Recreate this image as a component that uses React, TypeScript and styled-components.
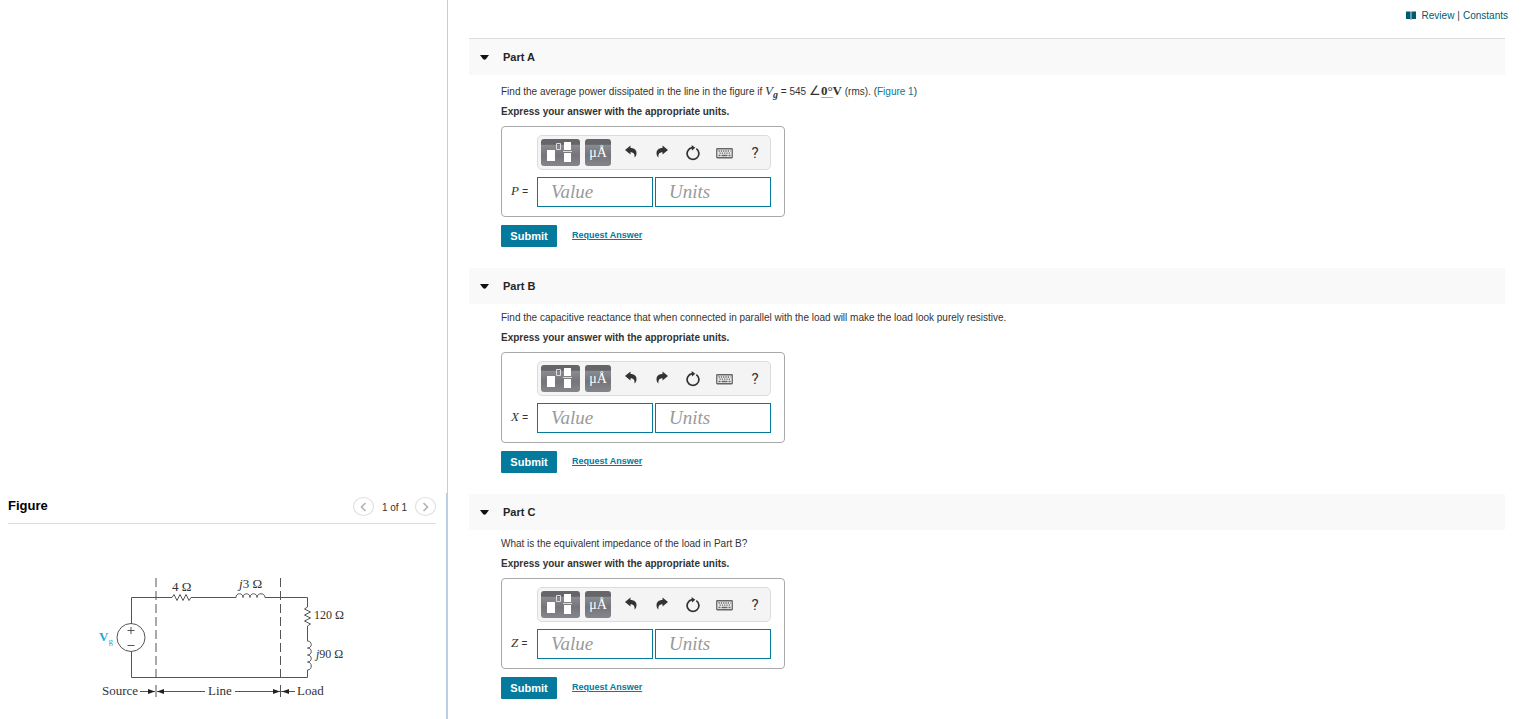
import React from "react";
import styled, { createGlobalStyle } from "styled-components";

const sans = `"Liberation Sans", Arial, sans-serif`;
const serif = `"Liberation Serif", "Times New Roman", serif`;
const teal = "#047a9c";

const GlobalStyle = createGlobalStyle`
  *, *::before, *::after { box-sizing: border-box; }
  body { margin: 0; background: #fff; color: #333; font-family: ${sans}; font-size: 10px; line-height: 14px; }
  button, input { font-family: inherit; margin: 0; }
  h2, p { margin: 0; }
`;

const Page = styled.div`
  display: grid;
  grid-template-columns: minmax(320px, 448fr) 1073fr;
  min-height: 100vh;
`;

const Sidebar = styled.aside`
  display: flex;
  flex-direction: column;
  justify-content: flex-end;
  border-right: 1px solid #c7cdd1;
`;

const FigurePanel = styled.section`
  padding: 3px 10px 15px 8px;
  border-right: 1px solid #b9cbe0;
`;

const FigureHeader = styled.div`
  display: flex;
  align-items: center;
  justify-content: space-between;
  height: 28px;
  border-bottom: 1px solid #dcdcdc;
  padding-bottom: 6px;
`;

const FigureTitle = styled.h2`
  font-size: 13px;
  line-height: 16px;
  font-weight: 600;
  color: #000;
  padding-bottom: 1px;
`;

const Pager = styled.div`
  display: flex;
  align-items: center;
  gap: 8px;
`;

const PagerButton = styled.button`
  display: grid;
  place-items: center;
  width: 21px;
  height: 19px;
  padding: 0;
  border: 1px solid #dedede;
  border-radius: 50%;
  background: #fff;
`;

const PagerText = styled.span`
  font-size: 10px;
  padding-top: 3px;
`;

const Circuit = styled.svg`
  display: block;
  margin: 46px auto 0;
  font-family: ${serif};
  font-size: 13px;
`;

const Main = styled.main`
  padding: 0 16px 0 21px;
`;

const TopLinks = styled.nav`
  display: flex;
  align-items: center;
  justify-content: flex-end;
  height: 38px;
  padding-bottom: 7px;
  margin-right: -3px;
  gap: 3px;
  font-size: 10px;
  color: #444;
`;

const TopLink = styled.a`
  display: inline-flex;
  align-items: center;
  gap: 6px;
  color: #005a70;
  text-decoration: none;
`;

const PartHeader = styled.h2<{ $ruled?: boolean }>`
  background: #f9f9f9;
  border-top: ${(p) => (p.$ruled ? "1px solid #dcdcdc" : "0")};
`;

const PartToggle = styled.button`
  display: flex;
  align-items: center;
  gap: 14px;
  width: 100%;
  height: 36px;
  padding: 0 11px;
  border: 0;
  background: none;
  color: #252525;
  font-size: 11px;
  font-weight: 600;
`;

const PartBody = styled.div`
  padding: 7px 0 21px 32px;
`;

const Question = styled.p`
  margin-bottom: 6px;
`;

const Instruction = styled.p`
  margin-bottom: 7px;
  font-weight: 700;
`;

const MathText = styled.span`
  font-family: ${serif};
  font-size: 13px;
  line-height: 17px;
`;

const MathSub = styled.sub`
  font-size: 10px;
  line-height: 0;
  font-style: italic;
  font-weight: 700;
  vertical-align: -3px;
`;

const Phase = styled.span`
  display: inline-block;
  line-height: 12px;
  border-bottom: 1px solid #aaa;
`;

const FigureLink = styled.a`
  color: ${teal};
  text-decoration: none;
`;

const AnswerBox = styled.div`
  display: grid;
  grid-template-columns: 26px 234px;
  row-gap: 7px;
  width: fit-content;
  padding: 8px 13px 9px 9px;
  border: 1px solid #a9a9a9;
  border-radius: 4px;
`;

const Toolbar = styled.div`
  grid-column: 2;
  display: flex;
  align-items: center;
  gap: 1px;
  height: 35px;
  padding-left: 3px;
  background: #f4f4f4;
  border: 1px solid #dcdcdc;
  border-radius: 5px;
`;

const DarkTool = styled.button<{ $width: number }>`
  display: grid;
  place-items: center;
  flex: none;
  width: ${(p) => p.$width}px;
  height: 27px;
  margin-right: 4px;
  padding: 0;
  border: 0;
  border-radius: 3px;
  background: linear-gradient(#66666a 0 20%, #8b8b93 22%, #74747a 60%, #85858c);
  color: #fff;
  font: 14px/25px ${serif};
`;

const Tool = styled.button`
  display: grid;
  place-items: center;
  flex: none;
  width: 30px;
  height: 30px;
  padding: 0;
  border: 0;
  background: none;
  color: #333;
  font-family: Roboto, ${sans};
  font-size: 15px;
`;

const VariableLabel = styled.label`
  align-self: center;
  padding-bottom: 1px;
  font-family: ${serif};
  font-size: 13px;
`;

const Equals = styled.span`
  font-family: ${sans};
  font-size: 10px;
`;

const Fields = styled.div`
  display: grid;
  grid-template-columns: 1fr 1fr;
  gap: 2px;
`;

const Field = styled.input`
  min-width: 0;
  width: 100%;
  height: 30px;
  padding: 0 13px;
  border: 1px solid ${teal};
  border-radius: 0;
  background: #fff;
  font: italic 19px/24px ${serif};
  &::placeholder { color: #999; opacity: 1; }
`;

const Actions = styled.div`
  display: flex;
  align-items: center;
  gap: 15px;
  margin-top: 8px;
`;

const SubmitButton = styled.button`
  width: 56px;
  height: 22px;
  padding: 0;
  border: 0;
  border-radius: 1px;
  background: ${teal};
  color: #fff;
  font-size: 11px;
  font-weight: 700;
`;

const RequestLink = styled.a`
  padding-bottom: 2px;
  color: ${teal};
  font-size: 9px;
  font-weight: 700;
`;

const Caret = () => (
  <svg width="9" height="5" viewBox="0 0 9 5" aria-hidden="true">
    <path d="M0 0h9L6 4Q4.500 5.500 3 4z" fill="#111" />
  </svg>
);

const Chevron = ({ right }: { right?: boolean }) => (
  <svg width="7" height="10" viewBox="0 0 7 10" fill="none" stroke="#b4b4b4" strokeWidth="1.600" aria-hidden="true">
    <path d={right ? "M1.500 1l4 4-4 4" : "M5.500 1l-4 4 4 4"} />
  </svg>
);

const BookIcon = () => (
  <svg width="10" height="9" viewBox="0 0 10 9" aria-hidden="true">
    <path d="M0 .5h4.600v7.500H0zM5.400 .5H10v7.500H5.400z" fill="#005a70" />
    <path d="M4.500 1h1v8h-1z" fill="#5f97a5" />
  </svg>
);

const TemplateIcon = () => (
  <svg width="27" height="23" viewBox="0 0 27 23" aria-hidden="true">
    <path d="M0 9h8v11H0zM17 1h7v8h-7zM17 12h7v9h-7z" fill="#fff" />
    <path d="M9.500 2.500h4v6h-4z" fill="none" stroke="#ddd" />
    <path d="M16 10.500h9" stroke="#ddd" />
  </svg>
);

const UndoIcon = ({ flip }: { flip?: boolean }) => (
  <svg width="12" height="15" viewBox="0 0 12 15" aria-hidden="true">
    <path
      d="M0 5L5.500 .5V3C9.500 3 11.500 5.200 11.500 8.200C11.500 10 10.800 11.400 9.500 12.600C10 9 8.800 7.300 5.500 7.200V9.500z"
      fill="#333"
      transform={flip ? "matrix(-1 0 0 1 12 0)" : undefined}
    />
  </svg>
);

const ResetIcon = () => (
  <svg width="14" height="16" viewBox="0 0 14 16" aria-hidden="true">
    <path d="M10.300 3.600A5.900 5.900 0 1 1 6 2.700" fill="none" stroke="#333" strokeWidth="1.700" />
    <path d="M5.600 0L9.300 2.700L6 5.600z" fill="#333" />
  </svg>
);

const KeyboardIcon = () => (
  <svg width="17" height="13" viewBox="0 -2 17 13" aria-hidden="true">
    <rect x=".75" y=".75" width="15.500" height="9" rx=".5" fill="#eee" stroke="#666" strokeWidth="1.300" />
    <g stroke="#666" strokeWidth="1.300">
      <path d="M2.500 3h12" strokeDasharray="1.300 1" />
      <path d="M3.500 5.200h11" strokeDasharray="1.300 1" />
      <path d="M2.500 7.500h2M5.500 7.500h6M12.500 7.500h2" />
    </g>
  </svg>
);

const CircuitDiagram = () => (
  <Circuit width="264" height="135" viewBox="90 570 264 135" role="img" aria-label="Circuit with source, line and load">
    <g fill="none" stroke="#555" strokeWidth="1">
      <path d="M131.500 624V597.500H172l2-3 3 6 3-6 3 6 3-6 3 6 2-3H236c0-5 7-5 7 0c0-5 7-5 7 0c0-5 7-5 7 0c0-5 8-5 8 0H307.500V607l-3 2 6 3-6 3 6 3-6 3 6 3-3 2V641c5 0 5 7 0 7c5 0 5 7 0 7c5 0 5 7 0 7c5 0 5 8 0 8V677.500H131.500V652" />
      <circle cx="131" cy="637.500" r="14" />
      <path d="M127.500 630.500h7M131 627v7M127.500 645.500h7" />
      <path d="M156 578V682M280.500 578V682" strokeDasharray="9 4" />
      <path d="M156 685v12M280.500 685v12M140 691.500h15M157 691.500h48M235 691.500h45M281 691.500h14" />
    </g>
    <path d="M148 689l7 2.500-7 2.500zM164 689l-7 2.500 7 2.500zM273 689l7 2.500-7 2.500zM289 689l-7 2.500 7 2.500z" fill="#222" />
    <g fill="#333">
      <text x="172" y="591">4 Ω</text>
      <text x="239" y="588"><tspan fontStyle="italic">j</tspan>3 Ω</text>
      <text x="314" y="619" fontSize="12">120 Ω</text>
      <text x="316" y="658" fontSize="12"><tspan fontStyle="italic">j</tspan>90 Ω</text>
      <text x="102" y="695">Source</text>
      <text x="208" y="695">Line</text>
      <text x="297" y="695">Load</text>
    </g>
    <text x="99" y="641" fill="#1ba9e1" fontWeight="700">V<tspan fontSize="9" fontWeight="400" dy="3">g</tspan></text>
  </Circuit>
);

type PartProps = { name: string; variable: string; first?: boolean; children: React.ReactNode };

const Part = ({ name, variable, first, children }: PartProps) => (
  <section>
    <PartHeader $ruled={first}>
      <PartToggle type="button" aria-expanded="true"><Caret />{name}</PartToggle>
    </PartHeader>
    <PartBody>
      <Question>{children}</Question>
      <Instruction>Express your answer with the appropriate units.</Instruction>
      <AnswerBox>
        <Toolbar role="toolbar">
          <DarkTool type="button" $width={39} aria-label="Templates"><TemplateIcon /></DarkTool>
          <DarkTool type="button" $width={26} aria-label="Symbols">μÅ</DarkTool>
          <Tool type="button" aria-label="Undo"><UndoIcon /></Tool>
          <Tool type="button" aria-label="Redo"><UndoIcon flip /></Tool>
          <Tool type="button" aria-label="Reset"><ResetIcon /></Tool>
          <Tool type="button" aria-label="Keyboard shortcuts"><KeyboardIcon /></Tool>
          <Tool type="button" aria-label="Help">?</Tool>
        </Toolbar>
        <VariableLabel htmlFor={`value-${variable}`}><i>{variable}</i> <Equals>=</Equals></VariableLabel>
        <Fields>
          <Field id={`value-${variable}`} placeholder="Value" />
          <Field aria-label={`${variable} units`} placeholder="Units" />
        </Fields>
      </AnswerBox>
      <Actions>
        <SubmitButton type="button">Submit</SubmitButton>
        <RequestLink href="#request">Request Answer</RequestLink>
      </Actions>
    </PartBody>
  </section>
);

export default function App() {
  return (
    <Page>
      <GlobalStyle />
      <Sidebar>
        <FigurePanel>
          <FigureHeader>
            <FigureTitle>Figure</FigureTitle>
            <Pager>
              <PagerButton type="button" aria-label="Previous figure"><Chevron /></PagerButton>
              <PagerText>1 of 1</PagerText>
              <PagerButton type="button" aria-label="Next figure"><Chevron right /></PagerButton>
            </Pager>
          </FigureHeader>
          <CircuitDiagram />
        </FigurePanel>
      </Sidebar>
      <Main>
        <TopLinks>
          <TopLink href="#review"><BookIcon />Review</TopLink>
          <span>|</span>
          <TopLink href="#constants">Constants</TopLink>
        </TopLinks>
        <Part name="Part A" variable="P" first>
          Find the average power dissipated in the line in the figure if{" "}
          <MathText><i>V</i><MathSub>g</MathSub></MathText> = 545{" "}
          <MathText>∠<Phase><b>0</b>°</Phase><b>V</b></MathText> (rms). (<FigureLink href="#figure">Figure 1</FigureLink>)
        </Part>
        <Part name="Part B" variable="X">
          Find the capacitive reactance that when connected in parallel with the load will make the load look purely resistive.
        </Part>
        <Part name="Part C" variable="Z">
          What is the equivalent impedance of the load in Part B?
        </Part>
      </Main>
    </Page>
  );
}
